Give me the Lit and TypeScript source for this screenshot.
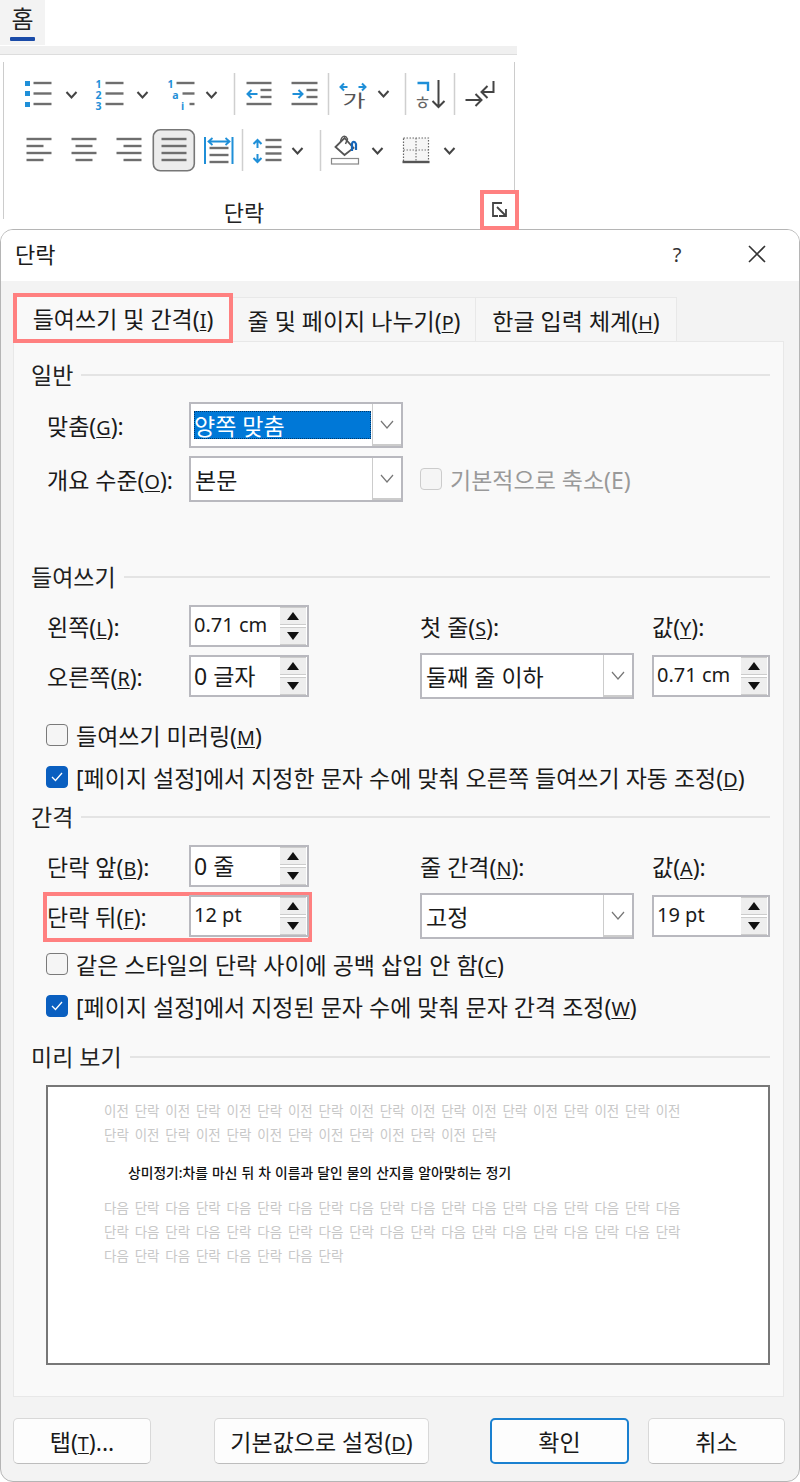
import { LitElement, html, css, svg } from "lit";
import { customElement } from "lit/decorators.js";

const BLUE = "#1f8fd8";
const GREY = "#6e6e6e";
const DARK = "#444";

const chev = (cx: number, cy: number) =>
  svg`<path d="M${cx - 5} ${cy - 3}L${cx} ${cy + 2.5}L${cx + 5} ${cy - 3}" fill="none" stroke="${DARK}" stroke-width="2"/>`;
const ln = (x1: number, x2: number, y: number, c = GREY, w = 2.4) =>
  svg`<line x1="${x1}" x2="${x2}" y1="${y}" y2="${y}" stroke="${c}" stroke-width="${w}"/>`;
const sep = (x: number, y1: number, y2: number) =>
  svg`<line x1="${x}" x2="${x}" y1="${y1}" y2="${y2}" stroke="#cfcfcf" stroke-width="1.5"/>`;
const digit = (x: number, y: number, t: string) =>
  svg`<text x="${x}" y="${y}" fill="${BLUE}" font-size="10.5" font-weight="700" text-anchor="middle" font-family="'Open Sans',sans-serif">${t}</text>`;

const row1 = svg`
  <rect x="25.5" y="81" width="5" height="5" fill="${BLUE}"/><rect x="25.5" y="91" width="5" height="5" fill="${BLUE}"/><rect x="25.5" y="102" width="5" height="5" fill="${BLUE}"/>
  ${ln(34, 52, 83)}${ln(34, 52, 93.5)}${ln(34, 52, 104)}
  ${chev(72, 95)}
  ${digit(99, 88, "1")}${digit(99, 99, "2")}${digit(99, 110, "3")}
  ${ln(106, 124, 83)}${ln(106, 124, 93.5)}${ln(106, 124, 104)}
  ${chev(143, 95)}
  ${digit(171, 88, "1")}${digit(176, 99, "a")}${digit(183, 110, "i")}
  ${ln(177, 195, 83)}${ln(183, 195, 93.5)}${ln(190, 195, 104)}
  ${chev(212, 95)}
  ${sep(235, 73, 115)}
  ${ln(247, 272, 83)}${ln(261, 272, 90)}${ln(261, 272, 97)}${ln(247, 272, 104)}
  <path d="M258 94H248M252 90L248 94L252 98" fill="none" stroke="${BLUE}" stroke-width="2"/>
  ${ln(292, 318, 83)}${ln(307, 318, 90)}${ln(307, 318, 97)}${ln(292, 318, 104)}
  <path d="M293 94H303M299 90L303 94L299 98" fill="none" stroke="${BLUE}" stroke-width="2"/>
  ${sep(329, 73, 115)}
  <path d="M348 87H341M344.5 83.5L341 87L344.5 90.500M359 87H366M362.500 83.500L366 87L362.500 90.500" fill="none" stroke="${BLUE}" stroke-width="2"/>
  <text x="343" y="107" font-size="17" fill="#555" textLength="23" lengthAdjust="spacingAndGlyphs" font-family="'Noto Sans CJK KR',sans-serif">가</text>
  ${chev(384, 94)}
  ${sep(406, 73, 115)}
  <path d="M418 83H428.500V91" fill="none" stroke="${BLUE}" stroke-width="2.400"/>
  <text x="423" y="110" font-size="19" fill="#666" text-anchor="middle" font-family="'Noto Sans CJK KR',sans-serif">ㅎ</text>
  <path d="M439 80V107M433 101L439 107L445 101" fill="none" stroke="${DARK}" stroke-width="2"/>
  ${sep(455, 73, 115)}
  <path d="M494 81V92H482M488 86L482 92L488 98" fill="none" stroke="${DARK}" stroke-width="2"/>
  <path d="M466 100H482M476 94L482 100L476 106" fill="none" stroke="${DARK}" stroke-width="2"/>
`;

const row2 = svg`
  ${ln(27, 52, 139)}${ln(27, 44, 146)}${ln(27, 52, 153)}${ln(27, 44, 160)}
  ${ln(72, 97, 139)}${ln(76, 93, 146)}${ln(72, 97, 153)}${ln(76, 93, 160)}
  ${ln(117, 142, 139)}${ln(124, 142, 146)}${ln(117, 142, 153)}${ln(124, 142, 160)}
  <rect x="153.800" y="129.800" width="41" height="41" rx="7" fill="#ececec" stroke="#777" stroke-width="1.600"/>
  ${ln(162, 187, 139)}${ln(162, 187, 146)}${ln(162, 187, 153)}${ln(162, 187, 160)}
  <path d="M205.500 137V164M233 137V164" stroke="${BLUE}" stroke-width="2" fill="none"/>
  <path d="M209 141.500H230M213 138L209 141.500L213 145M226 138L230 141.500L226 145" stroke="${BLUE}" stroke-width="1.800" fill="none"/>
  ${ln(210, 229, 148)}${ln(210, 229, 155)}${ln(210, 229, 162)}
  ${sep(243, 129, 171)}
  <path d="M258 140V148M254 144L258 140L262 144M258 154V162M254 158L258 162L262 158" stroke="${BLUE}" stroke-width="2" fill="none"/>
  ${ln(266, 282, 140)}${ln(266, 282, 147)}${ln(266, 282, 153.500)}${ln(266, 282, 160)}
  ${chev(298, 151)}
  ${sep(321, 130, 171)}
  <path d="M336 147L345 138L354 148L345 155Z" fill="none" stroke="#555" stroke-width="1.800"/>
  <path d="M341 142C342 135 346 135 348 139L346 144" fill="none" stroke="#555" stroke-width="1.500"/>
  <path d="M352.500 151V144C353 141 355.500 141 356.500 144V150" fill="none" stroke="#1565b8" stroke-width="2.200"/>
  <rect x="332" y="158.500" width="27" height="5.500" fill="#fff" stroke="#888" stroke-width="1.200"/>
  ${chev(378, 151)}
  <rect x="404" y="138" width="25" height="24" fill="#f6f6f6" stroke="#666" stroke-width="1.200" stroke-dasharray="1.500 1.500"/>
  <path d="M416.500 138V162M404 150H429" stroke="#777" stroke-width="1.200" stroke-dasharray="1.500 1.500" fill="none"/>
  ${ln(403, 430, 162, "#555", 2.4)}
  ${chev(450, 151)}
`;

const preview = (a: string, b: string, n: number, start: boolean) => {
  const words: string[] = [];
  let first = start;
  for (let i = 0; i < n; i++) {
    words.push(first ? a : b);
    first = !first;
  }
  return words.join(" ");
};

const upArrow = html`<svg width="12" height="8" viewBox="0 0 12 8"><path d="M6 0L12 8H0Z" fill="#111"/></svg>`;
const downArrow = html`<svg width="12" height="8" viewBox="0 0 12 8"><path d="M0 0H12L6 8Z" fill="#111"/></svg>`;

@customElement("app-root")
export class AppRoot extends LitElement {
  static styles = css`
    :host {
      display: block;
      position: relative;
      width: 800px;
      height: 1482px;
      background: #fff;
      overflow: hidden;
      font-family: "Noto Sans", "Noto Sans CJK KR", sans-serif;
      font-size: 23px;
      color: #1a1a1a;
    }
    u { text-underline-offset: 2px; text-decoration-thickness: 1px; font-size: 0.86em; }
    .ribbon { height: 228px; position: relative; z-index: 2; }
    .home {
      width: 45px; height: 45px; background: #f3f3f3;
      display: flex; flex-direction: column; align-items: center;
    }
    .home-t { font-size: 24px; line-height: 37px; height: 37px; color: #222; }
    .home-u { width: 25px; height: 4px; background: #1a4ba8; border-radius: 1px; }
    .band {
      width: 517px; height: 8px; margin-top: 1px;
      background: #f0f0f0; border-bottom: 1px solid #ddd;
    }
    .group {
      margin: 7px 0 0 3px; width: 512px; height: 157px; box-sizing: border-box;
      border-left: 1.500px solid #ccc; border-right: 1.500px solid #ccc;
      padding-top: 11px;
    }
    .group svg { display: block; }
    .row2 { margin-top: 10px; }
    .group-label {
      margin-top: 26px; height: 26px; line-height: 26px; font-size: 22px;
      text-align: center; padding-right: 30px; color: #222;
    }
    .launcher {
      position: absolute; left: 480px; top: 190px; width: 39px; height: 40px;
      box-sizing: border-box; border: 4px solid #ff8080; background: #fff;
      display: flex; align-items: center; justify-content: center;
    }
    .dialog {
      width: 800px; height: 1253px; box-sizing: border-box;
      border: 1.500px solid #b5b5b5; border-radius: 13px;
      background: #f3f3f3; overflow: hidden; margin-top: 1px;
    }
    .title {
      height: 51px; background: #fff; display: flex; align-items: center;
      padding-left: 14px; padding-bottom: 3px; box-sizing: border-box;
    }
    .title-t { flex: 1; font-size: 22px; margin-top: -3px; }
    .q { font-size: 20px; width: 20px; text-align: center; margin-right: 61px; color: #333; }
    .x { margin-right: 33px; display: block; }
    .tabs {
      height: 60px; display: flex; align-items: flex-end; padding-left: 12px;
    }
    .tab {
      height: 44px; box-sizing: border-box; display: flex; align-items: center; justify-content: center;
      background: #f6f6f6; border: 1.500px solid #e8e8e8; border-bottom: none; white-space: nowrap;
    }
    .tab.on {
      width: 220px; height: 50px; margin-bottom: -2px; border: 4px solid #ff8080; background: #f9f9f9;
      position: relative; z-index: 1;
    }
    .tab.t2 { width: 243px; border-left: none; }
    .tab.t3 { width: 201px; border-left: none; }
    .panel {
      margin-left: 12px; width: 771px; height: 1056px; box-sizing: border-box;
      background: #f9f9f9; border: 1.500px solid #e8e8e8;
      padding: 18px 13px 0 17px;
    }
    .head { height: 28px; display: flex; align-items: center; gap: 8px; color: #222; }
    .head i { flex: 1; height: 2px; background: #e4e4e4; margin-top: 2px; }
    .gen { margin: 14px 0 0 16px; display: grid; grid-template-columns: 142px 214px auto; grid-template-rows: 46px 46px; row-gap: 8px; align-items: center; }
    .nowrap { white-space: nowrap; }
    .combo {
      display: flex; height: 100%; box-sizing: border-box; background: #fff; border: 2px solid #b9b9bf;
      align-items: stretch; min-width: 0; padding-left: 2px;
    }
    .fieldgrid .combo { height: 46px; }
    .combo .val { flex: 1; display: flex; align-items: center; padding-left: 2px; white-space: nowrap; }
    .combo.sel .val { margin: 7px 1px; padding-left: 0; background: #0078d7; color: #fff; outline: 1px dotted #00386a; outline-offset: -1px; }
    .combo .dd {
      width: 28px; background: #fff; border-left: 1.500px solid #ccc; border-bottom: 2px solid #ccc;
      display: flex; align-items: center; justify-content: center; margin-top: 0;
    }
    .cbdis { display: flex; align-items: center; gap: 8px; margin-left: 17px; color: #999; white-space: nowrap; }
    .box { width: 22px; height: 22px; box-sizing: border-box; border-radius: 4px; border: 1.500px solid #7a7a7a; background: #f5f5f5; flex: none; display: flex; align-items: center; justify-content: center; }
    .box.dis { border-color: #ccc; }
    .box.on { background: #0a5fc0; border-color: #0a5fc0; }
    .fieldgrid {
      position: relative; margin: 15px 0 0 16px; display: grid;
      grid-template-columns: 142px 120px 111px 214px 18px 118px;
      grid-template-rows: 42px 42px; row-gap: 8px; align-items: center;
    }
    .fieldgrid .c3 { grid-column: 4; white-space: nowrap; }
    .fieldgrid .c4 { grid-column: 6; white-space: nowrap; }
    .fieldgrid .c2g { grid-column: 4; }
    .fieldgrid > span { white-space: nowrap; }
    .spin {
      height: 42px; box-sizing: border-box; background: #fff; border: 2px solid #b9b9bf;
      display: flex; align-items: center; padding-left: 3px; position: relative; z-index: 1;
    }
    .spin .val { flex: 1; white-space: nowrap; margin-top: -3px; }
    .spin .val.lat { font-size: 20px; }
    .spin .btns { width: 26px; margin-right: 1px; display: flex; flex-direction: column; gap: 2px; }
    .spin .btns b {
      height: 18px; background: #eeeeee; border-top: 1px solid #ccc; border-bottom: 1px solid #ccc; box-sizing: border-box;
      display: flex; align-items: center; justify-content: center;
    }
    .hl {
      position: absolute; left: -4px; top: 47px; width: 269px; height: 50px; box-sizing: border-box;
      border: 4px solid #ff8080;
    }
    .hlabel { position: relative; z-index: 1; }
    .cbs { margin-left: 15px; }
    .cbs.a { margin-top: 17px; }
    .cbs.b { margin-top: 6px; }
    .cb { height: 42px; display: flex; align-items: center; gap: 8px; white-space: nowrap; }
    .h2 { margin-top: 4px; }
    .h3 { margin-top: 15px; }
    .h1b { margin-top: 60px; }
    .preview {
      margin: 15px 0 0 15px; height: 280px; width: 724px; box-sizing: border-box;
      background: #fff; border: 2px solid #777; padding: 12px 0 0 56px;
      font-size: 13.500px; line-height: 24px; color: #c8c8c8; white-space: nowrap; word-spacing: 2.300px;
    }
    .preview .cur { color: #111; font-size: 13.800px; padding-left: 24px; margin: 14px 0 11px; font-weight: 500; word-spacing: 0.500px; }
    .footer { display: flex; margin: 21px 0 0 12px; }
    .btn {
      height: 46px; box-sizing: border-box; background: #fdfdfd; border: 1.500px solid #d8d8d8; border-bottom-color: #bdbdbd;
      border-radius: 5px; display: flex; align-items: center; justify-content: center; white-space: nowrap;
    }
    .b1 { width: 138px; }
    .b2 { width: 215px; margin-left: 63px; }
    .b3 { width: 139px; margin-left: 61px; border: 2px solid #1a80d0; }
    .b4 { width: 137px; margin-left: 19px; }
  `;

  private combo(val: string, cls = "") {
    return html`<div class="combo ${cls}"><span class="val">${val}</span><span class="dd"><svg width="14" height="9" viewBox="0 0 14 9"><path d="M1 1L7 8L13 1" fill="none" stroke="#777" stroke-width="1.200"/></svg></span></div>`;
  }
  private spin(val: string, lat = false) {
    return html`<div class="spin"><span class="val ${lat ? "lat" : ""}">${val}</span><span class="btns"><b>${upArrow}</b><b>${downArrow}</b></span></div>`;
  }
  private check = html`<svg width="12" height="10" viewBox="0 0 12 10"><path d="M1 5L4.500 8.500L11 1" fill="none" stroke="#fff" stroke-width="1.300"/></svg>`;

  render() {
    return html`
      <div class="ribbon">
        <div class="home"><span class="home-t">홈</span><span class="home-u"></span></div>
        <div class="band"></div>
        <div class="group">
          <svg width="505" height="44" viewBox="4.500 73 505 44">${row1}</svg>
          <svg class="row2" width="505" height="46" viewBox="4.500 127 505 46">${row2}</svg>
          <div class="group-label">단락</div>
        </div>
        <div class="launcher">
          <svg width="18" height="18" viewBox="0 0 18 18"><path d="M11 2H2V15H7M6 6L15 15M15 8V15H8" fill="none" stroke="#444" stroke-width="1.800"/></svg>
        </div>
      </div>
      <div class="dialog">
        <div class="title">
          <span class="title-t">단락</span>
          <span class="q">?</span>
          <svg class="x" width="18" height="18" viewBox="0 0 18 18"><path d="M1 1L17 17M17 1L1 17" stroke="#333" stroke-width="1.600"/></svg>
        </div>
        <div class="tabs">
          <div class="tab on"><span>들여쓰기 및 간격(<u>I</u>)</span></div>
          <div class="tab t2"><span>줄 및 페이지 나누기(<u>P</u>)</span></div>
          <div class="tab t3"><span>한글 입력 체계(<u>H</u>)</span></div>
        </div>
        <div class="panel">
          <div class="head"><span>일반</span><i></i></div>
          <div class="gen">
            <span>맞춤(<u>G</u>):</span>
            ${this.combo("양쪽 맞춤", "sel")}
            <span></span>
            <span class="nowrap">개요 수준(<u>O</u>):</span>
            ${this.combo("본문")}
            <div class="cbdis"><span class="box dis"></span><span>기본적으로 축소(E)</span></div>
          </div>

          <div class="head h1b"><span>들여쓰기</span><i></i></div>
          <div class="fieldgrid">
            <span>왼쪽(<u>L</u>):</span>
            ${this.spin("0.71 cm", true)}
            <span class="c3">첫 줄(<u>S</u>):</span>
            <span class="c4">값(<u>Y</u>):</span>
            <span>오른쪽(<u>R</u>):</span>
            ${this.spin("0 글자")}
            <span class="c2g">${this.combo("둘째 줄 이하")}</span>
            <span class="c4">${this.spin("0.71 cm", true)}</span>
          </div>
          <div class="cbs a">
            <div class="cb"><span class="box"></span><span>들여쓰기 미러링(<u>M</u>)</span></div>
            <div class="cb"><span class="box on">${this.check}</span><span>[페이지 설정]에서 지정한 문자 수에 맞춰 오른쪽 들여쓰기 자동 조정(<u>D</u>)</span></div>
          </div>

          <div class="head h2"><span>간격</span><i></i></div>
          <div class="fieldgrid">
            <div class="hl"></div>
            <span>단락 앞(<u>B</u>):</span>
            ${this.spin("0 줄")}
            <span class="c3">줄 간격(<u>N</u>):</span>
            <span class="c4">값(<u>A</u>):</span>
            <span class="hlabel">단락 뒤(<u>F</u>):</span>
            ${this.spin("12 pt", true)}
            <span class="c2g">${this.combo("고정")}</span>
            <span class="c4">${this.spin("19 pt", true)}</span>
          </div>
          <div class="cbs b">
            <div class="cb"><span class="box"></span><span>같은 스타일의 단락 사이에 공백 삽입 안 함(<u>C</u>)</span></div>
            <div class="cb"><span class="box on">${this.check}</span><span>[페이지 설정]에서 지정된 문자 수에 맞춰 문자 간격 조정(<u>W</u>)</span></div>
          </div>

          <div class="head h3"><span>미리 보기</span><i></i></div>
          <div class="preview">
            <div>${preview("이전", "단락", 19, true)}</div>
            <div>${preview("이전", "단락", 13, false)}</div>
            <div class="cur">상미정기:차를 마신 뒤 차 이름과 달인 물의 산지를 알아맞히는 정기</div>
            <div>${preview("다음", "단락", 19, true)}</div>
            <div>${preview("다음", "단락", 19, false)}</div>
            <div>${preview("다음", "단락", 8, true)}</div>
          </div>
        </div>
        <div class="footer">
          <div class="btn b1"><span>탭(<u>T</u>)...</span></div>
          <div class="btn b2"><span>기본값으로 설정(<u>D</u>)</span></div>
          <div class="btn b3"><span>확인</span></div>
          <div class="btn b4"><span>취소</span></div>
        </div>
      </div>
    `;
  }
}
